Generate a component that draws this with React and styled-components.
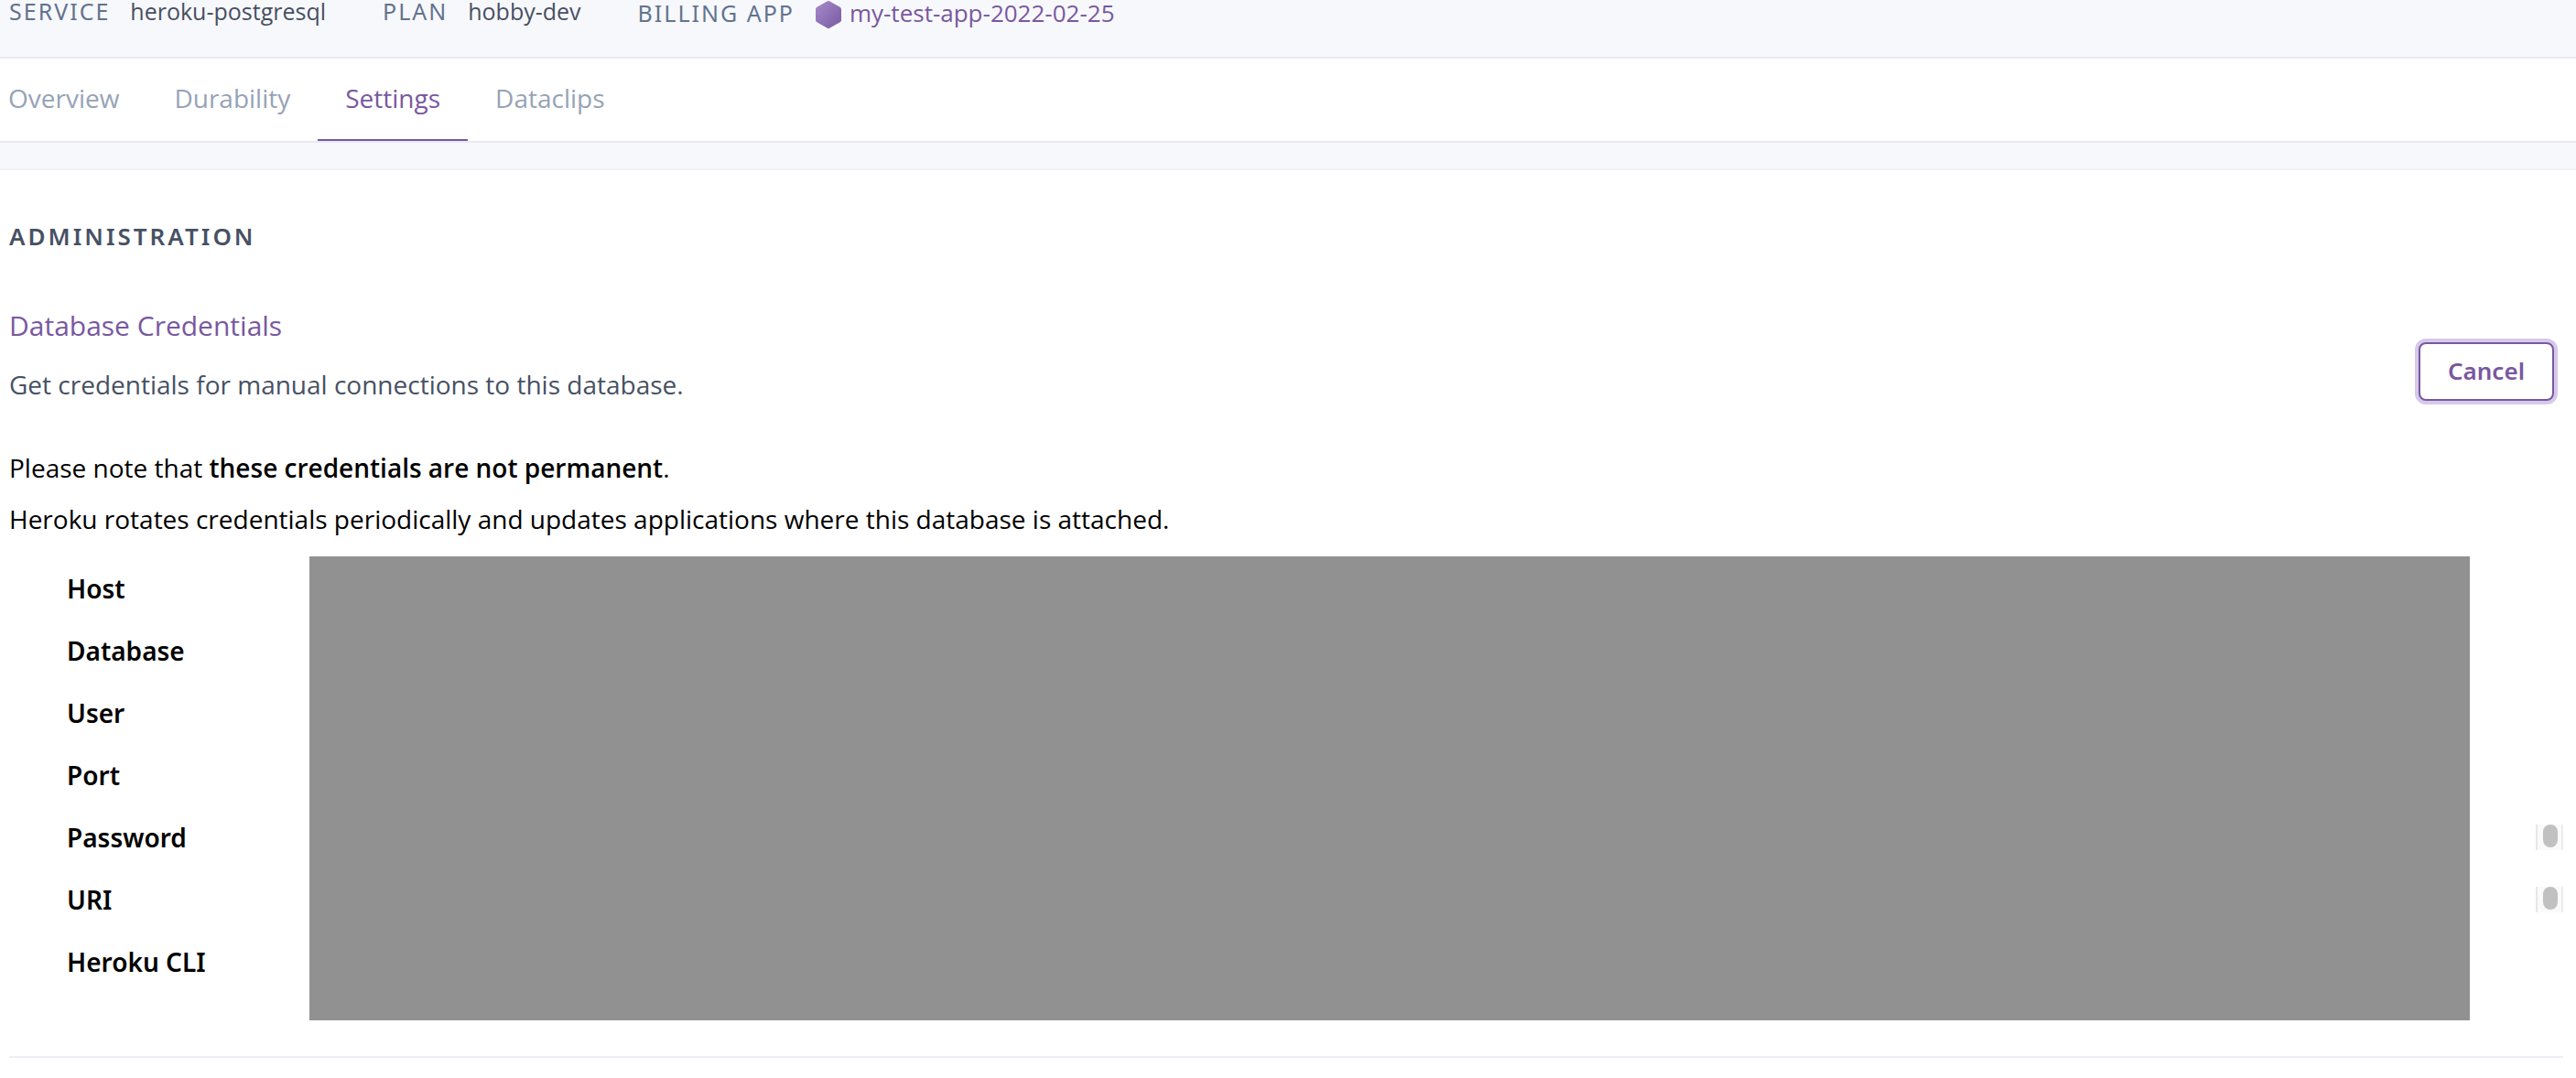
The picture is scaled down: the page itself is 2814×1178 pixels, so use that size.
import React from 'react';
import styled, { createGlobalStyle } from 'styled-components';

const GlobalStyle = createGlobalStyle`
  * {
    box-sizing: border-box;
  }

  body {
    margin: 0;
    background: #ffffff;
    color: #000000;
    font-family: 'Open Sans', 'Noto Sans', sans-serif;
    font-size: 28px;
  }
`;

const ServiceBar = styled.header`
  display: flex;
  align-items: flex-start;
  gap: 62px;
  height: 64px;
  padding: 0 14px 0 10px;
  background: #f7f8fc;
  border-bottom: 2px solid #e9eaf2;
  white-space: nowrap;
`;

const ServiceItem = styled.div`
  display: flex;
  align-items: flex-start;
  gap: 22px;
  line-height: ${({ $tall }) => ($tall ? '28px' : '24px')};
`;

const ServiceLabel = styled.span`
  color: #62738d;
  font-family: 'Noto Sans', sans-serif;
  font-size: 25px;
  letter-spacing: 2px;
`;

const ServiceValue = styled.span`
  color: #474f61;
  font-size: 25px;
`;

const AppLink = styled.a`
  display: flex;
  gap: 8px;
  color: #79589f;
  font-size: 26px;
  text-decoration: none;
`;

const Tabs = styled.nav`
  display: flex;
  padding: 0 14px 0 0;
  border-bottom: 2px solid #e9eaf2;
  background: #ffffff;
`;

const Tab = styled.a`
  height: 90px;
  padding: 0 30px;
  border-bottom: 2px solid ${({ $active }) => ($active ? '#79589f' : 'transparent')};
  color: ${({ $active }) => ($active ? '#79589f' : '#96a3b6')};
  line-height: 86px;
  text-decoration: none;

  &:first-child {
    padding-left: 9px;
  }
`;

const Strip = styled.div`
  height: 30px;
  background: #f7f8fc;
  border-bottom: 2px solid #f0f1f6;
`;

const Panel = styled.main`
  padding: 52px 14px 0 10px;
`;

const SectionTitle = styled.h2`
  margin: 0 0 58px;
  color: #475164;
  font-family: 'Noto Sans', sans-serif;
  font-size: 26px;
  font-weight: 600;
  letter-spacing: 3px;
  line-height: 40px;
`;

const SettingRow = styled.section`
  display: flex;
  align-items: flex-end;
  justify-content: space-between;
  margin-bottom: 45px;
  padding-right: 10px;
`;

const SettingName = styled.h3`
  margin: 0 0 26px;
  color: #79589f;
  font-size: 30px;
  font-weight: 400;
  line-height: 40px;
`;

const SettingText = styled.p`
  margin: 0;
  color: #475164;
  line-height: 36px;
`;

const CancelButton = styled.button`
  height: 64px;
  padding: 0 30px 2px;
  border: 2px solid #79589f;
  border-radius: 8px;
  background: #ffffff;
  box-shadow: 0 0 0 4px #d6c9ea;
  color: #79589f;
  font-family: 'Noto Sans', sans-serif;
  font-size: 26px;
  font-weight: 600;
  cursor: pointer;
`;

const Note = styled.p`
  margin: 0;
  line-height: 56px;

  strong {
    font-weight: 600;
  }
`;

const Credentials = styled.div`
  display: grid;
  grid-template-columns: 328px 1fr 102px;
  margin-top: 13px;
  padding-bottom: 39px;
  border-bottom: 2px solid #eeeef5;
`;

const Column = styled.div`
  display: flex;
  flex-direction: column;
  padding: 1px 0 30px;
`;

const FieldName = styled.div`
  height: 68px;
  padding-left: 63px;
  font-family: 'Noto Sans', sans-serif;
  font-weight: 600;
  line-height: 68px;
`;

const Redacted = styled.div`
  background: #919191;
`;

const ScrollCell = styled.div`
  display: flex;
  align-items: center;
  justify-content: flex-end;
  height: 68px;
`;

const Scroller = styled.div`
  width: 30px;
  height: 28px;
  padding-left: 6px;
  border-left: 2px solid #e7e7e7;
  border-right: 2px solid #ededed;
  background: #fafafa;
`;

const Thumb = styled.div`
  width: 16px;
  height: 25px;
  border-radius: 8px;
  background: #c1c1c1;
`;

const tabs = ['Overview', 'Durability', 'Settings', 'Dataclips'];

const fields = [
  { name: 'Host' },
  { name: 'Database' },
  { name: 'User' },
  { name: 'Port' },
  { name: 'Password', scrolls: true },
  { name: 'URI', scrolls: true },
  { name: 'Heroku CLI' },
];

const HexIcon = () => (
  <svg width="30" height="32" viewBox="0 0 30 32" aria-hidden="true">
    <defs>
      <linearGradient id="hex" x1="0" y1="0" x2="1" y2="1">
        <stop offset="0" stopColor="#a68ccc" />
        <stop offset="1" stopColor="#79589f" />
      </linearGradient>
    </defs>
    <path
      d="M13.4 1.5a3 3 0 0 1 3.2 0l11 6.2a2.6 2.6 0 0 1 1.4 2.3v12a2.6 2.6 0 0 1-1.4 2.3l-11 6.2a3 3 0 0 1-3.2 0l-11-6.2a2.6 2.6 0 0 1-1.4-2.3v-12a2.6 2.6 0 0 1 1.4-2.3z"
      fill="url(#hex)"
    />
  </svg>
);

const App = () => {
  return (
    <>
      <GlobalStyle />
      <ServiceBar>
        <ServiceItem>
          <ServiceLabel>SERVICE</ServiceLabel>
          <ServiceValue>heroku-postgresql</ServiceValue>
        </ServiceItem>
        <ServiceItem>
          <ServiceLabel>PLAN</ServiceLabel>
          <ServiceValue>hobby-dev</ServiceValue>
        </ServiceItem>
        <ServiceItem $tall>
          <ServiceLabel>BILLING APP</ServiceLabel>
          <AppLink href="#app">
            <HexIcon />
            my-test-app-2022-02-25
          </AppLink>
        </ServiceItem>
      </ServiceBar>

      <Tabs>
        {tabs.map((tab) => (
          <Tab key={tab} href={`#${tab.toLowerCase()}`} $active={tab === 'Settings'}>
            {tab}
          </Tab>
        ))}
      </Tabs>
      <Strip />

      <Panel>
        <SectionTitle>ADMINISTRATION</SectionTitle>
        <SettingRow>
          <div>
            <SettingName>Database Credentials</SettingName>
            <SettingText>Get credentials for manual connections to this database.</SettingText>
          </div>
          <CancelButton type="button">Cancel</CancelButton>
        </SettingRow>

        <Note>
          Please note that <strong>these credentials are not permanent</strong>.
        </Note>
        <Note>
          Heroku rotates credentials periodically and updates applications where this database is attached.
        </Note>

        <Credentials>
          <Column>
            {fields.map((field) => (
              <FieldName key={field.name}>{field.name}</FieldName>
            ))}
          </Column>
          <Redacted />
          <Column>
            {fields.map((field) => (
              <ScrollCell key={field.name}>
                {field.scrolls && (
                  <Scroller>
                    <Thumb />
                  </Scroller>
                )}
              </ScrollCell>
            ))}
          </Column>
        </Credentials>
      </Panel>
    </>
  );
};

export default App;
